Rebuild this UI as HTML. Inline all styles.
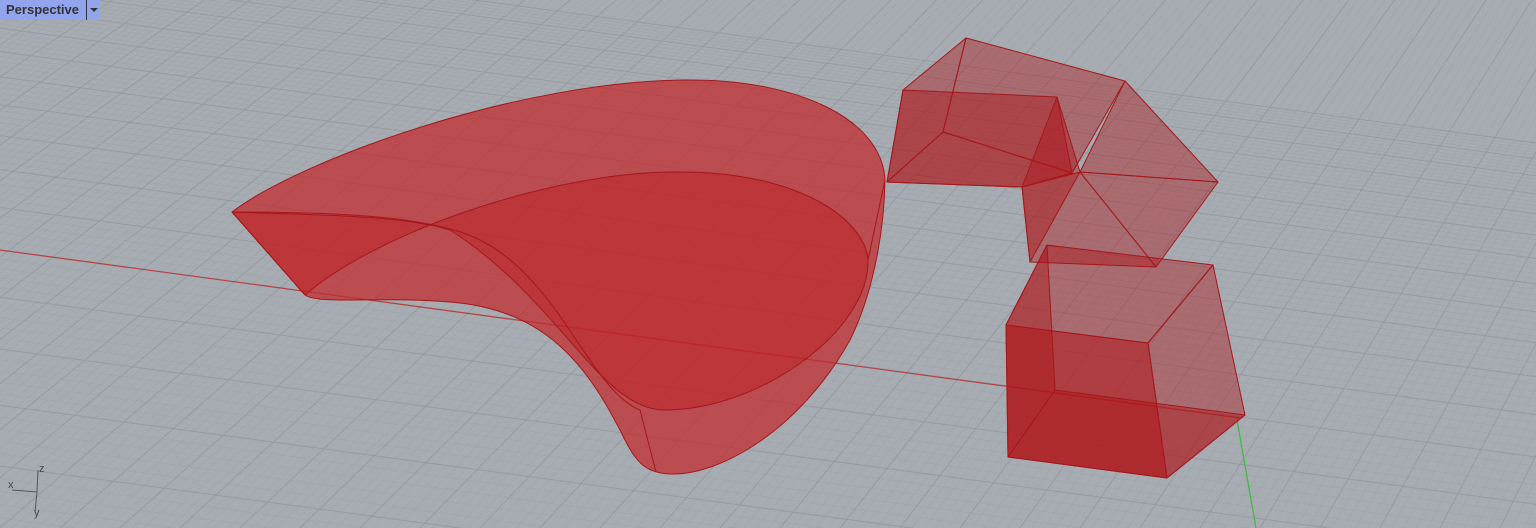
<!DOCTYPE html>
<html><head><meta charset="utf-8"><style>
html,body{margin:0;padding:0;width:1536px;height:528px;overflow:hidden;background:#a6acb1;}
#lbl{position:absolute;left:0;top:0;height:20px;width:100px;background:#93a4ee;font:bold 13px "Liberation Sans",sans-serif;color:#333;line-height:20px;padding-left:6px;box-sizing:border-box;}
#lbl span{position:absolute;left:86px;top:0;width:1px;height:20px;background:#333;}
#lbl b{position:absolute;left:90px;top:8px;border-left:4px solid transparent;border-right:4px solid transparent;border-top:4px solid #333;}
svg{position:absolute;left:0;top:0;overflow:hidden}
</style></head><body>
<svg id="s" width="1536" height="528" viewBox="0 0 1536 528">
<g id="grid" stroke="#8f959b" fill="none"></g>
<line x1="0" y1="250" x2="1240" y2="418" stroke="#b84040" stroke-width="1.2"/>
<line x1="1237" y1="420" x2="1256" y2="528" stroke="#3dba3d" stroke-width="1.2"/>
<g stroke="#a5171b" stroke-width="1" stroke-linejoin="round">
<path d="M232,212 C300,160 520,80 690,80 C800,80 882,120 885,180 C884,240 870,300 850,340 C800,430 720,475 672,474 C645,474 635,460 625,440 C590,370 550,310 450,302 C380,296 320,305 305,295 Z" fill="rgba(195,40,45,0.72)"/>
<path d="M305,295 C380,230 560,170 680,172 C800,172 865,220 868,260 C870,330 760,410 665,410 C600,410 560,300 450,230 C400,215 320,215 232,212 L305,295 Z" fill="rgba(190,20,25,0.4)"/>
<path d="M232,212 C330,212 430,215 480,240 C560,280 590,390 640,410 L656,472" fill="none"/>
<path d="M868,260 L885,180" fill="none"/>
</g>
<g stroke="#a5171b" stroke-width="1" stroke-linejoin="round" fill="rgba(175,20,25,0.42)">
<polygon points="966,38 1125,81 1072,173 943,132"/>
<polygon points="903,90 966,38 943,132 887,182"/>
<polygon points="887,182 943,132 1072,173 1022,187"/>
<polygon points="903,90 1057,97 1072,173 1022,187 887,182"/>
<polygon points="1125,81 1218,182 1080,172"/>
<polygon points="1218,182 1156,267 1080,172"/>
<polygon points="1080,172 1156,267 1030,262 1022,187"/>
<polygon points="1057,97 1080,172 1030,262 1022,187"/>
<polygon points="1047,245 1213,265 1148,343 1006,325"/>
<polygon points="1213,265 1245,415 1167,478 1148,343"/>
<polygon points="1006,325 1148,343 1167,478 1008,457" fill="rgba(180,15,20,0.7)"/>
<polygon points="1047,245 1055,390 1008,457 1006,325"/>
<polygon points="1055,390 1245,415 1167,478 1008,457"/>
</g>
<g font-family="Liberation Sans,sans-serif" font-size="11" fill="#444">
<text x="8" y="488">x</text><text x="39" y="472">z</text><text x="34" y="516">y</text>
</g>
<g stroke="#555" fill="none" stroke-width="1"><path d="M12,490 L37,492 L38,470 M37,492 L35,512"/></g>
</svg>
<div id="lbl">Perspective<span></span><b></b></div>
<script>
var g=document.getElementById('grid'),h='';
function L(a,b,c,d,w,o){h+='<line x1="'+a+'" y1="'+b+'" x2="'+c+'" y2="'+d+'" stroke-width="'+w+'" opacity="'+o+'"/>';}
for(var i=-60;i<80;i++){var y=i>=0?250+i*9*(1+i*0.01):250+i*9/(1-i*0.012);var maj=(i%5==0);L(0,y,1536,y+207,maj?1:0.6,maj?0.75:0.3);}
var vx=2600,vy=-1700;
for(var j=-120;j<200;j++){var x=j*12;var maj=(j%5==0);L(vx,vy,x-(vx-x)*0.3,528+(528-vy)*0.3,maj?1:0.6,maj?0.75:0.3);}
g.innerHTML=h;
</script>
</body></html>
